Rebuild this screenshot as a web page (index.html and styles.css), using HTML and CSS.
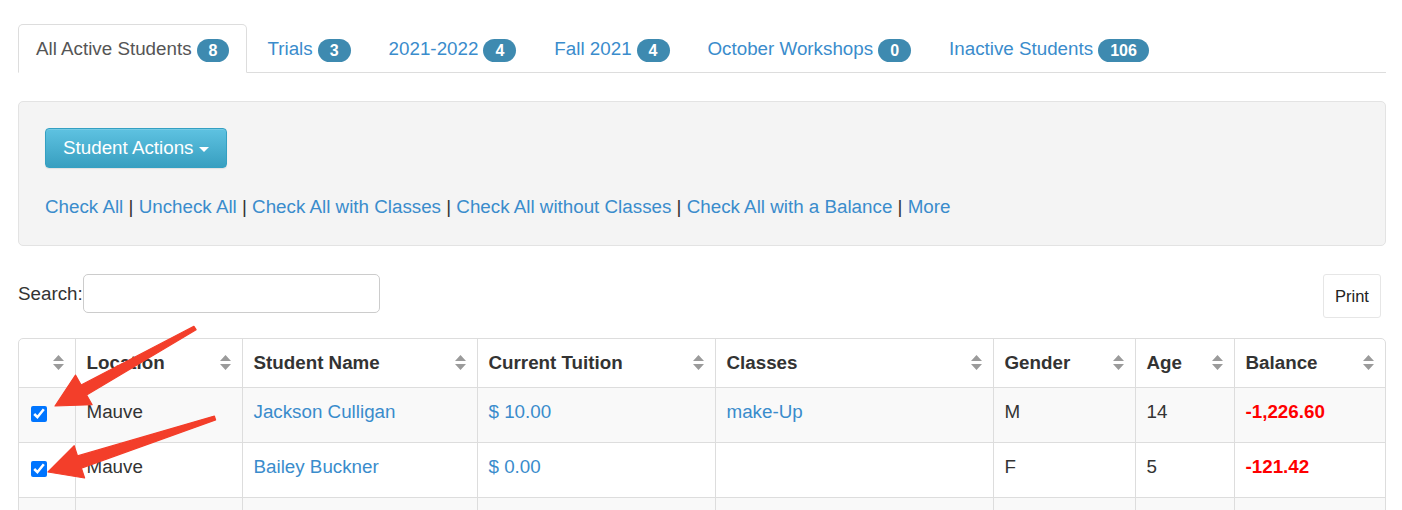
FILE: index.html
```html
<!DOCTYPE html>
<html>
<head>
<meta charset="utf-8">
<title>Students</title>
<link rel="stylesheet" href="styles.css">
</head>
<body>
<div class="page">
  <ul class="tabs">
    <li class="tab active"><a><span>All Active Students</span><span class="badge">8</span></a></li>
    <li class="tab"><a><span>Trials</span><span class="badge">3</span></a></li>
    <li class="tab"><a><span>2021-2022</span><span class="badge">4</span></a></li>
    <li class="tab"><a><span>Fall 2021</span><span class="badge">4</span></a></li>
    <li class="tab"><a><span>October Workshops</span><span class="badge">0</span></a></li>
    <li class="tab"><a><span>Inactive Students</span><span class="badge">106</span></a></li>
  </ul>

  <div class="well">
    <button class="btn-info">Student Actions <span class="caret"></span></button>
    <div class="check-links">
      <a>Check All</a> | <a>Uncheck All</a> | <a>Check All with Classes</a> | <a>Check All without Classes</a> | <a>Check All with a Balance</a> | <a>More</a>
    </div>
  </div>

  <div class="toolbar">
    <label class="search">Search:<input class="search-input" type="text"></label>
    <button class="print">Print</button>
  </div>

  <div class="table-wrap">
    <table class="data">
      <colgroup>
        <col class="c-check"><col class="c-loc"><col class="c-name"><col class="c-tuition"><col class="c-classes"><col class="c-gender"><col class="c-age"><col class="c-balance">
      </colgroup>
      <thead>
        <tr>
          <th><div class="th-in"><span></span><svg class="sort" viewBox="0 0 11 15"><path d="M0 6 L5.5 0 L11 6 Z M0 9 L5.5 15 L11 9 Z"/></svg></div></th>
          <th><div class="th-in"><span>Location</span><svg class="sort" viewBox="0 0 11 15"><path d="M0 6 L5.5 0 L11 6 Z M0 9 L5.5 15 L11 9 Z"/></svg></div></th>
          <th><div class="th-in"><span>Student Name</span><svg class="sort" viewBox="0 0 11 15"><path d="M0 6 L5.5 0 L11 6 Z M0 9 L5.5 15 L11 9 Z"/></svg></div></th>
          <th><div class="th-in"><span>Current Tuition</span><svg class="sort" viewBox="0 0 11 15"><path d="M0 6 L5.5 0 L11 6 Z M0 9 L5.5 15 L11 9 Z"/></svg></div></th>
          <th><div class="th-in"><span>Classes</span><svg class="sort" viewBox="0 0 11 15"><path d="M0 6 L5.5 0 L11 6 Z M0 9 L5.5 15 L11 9 Z"/></svg></div></th>
          <th><div class="th-in"><span>Gender</span><svg class="sort" viewBox="0 0 11 15"><path d="M0 6 L5.5 0 L11 6 Z M0 9 L5.5 15 L11 9 Z"/></svg></div></th>
          <th><div class="th-in"><span>Age</span><svg class="sort" viewBox="0 0 11 15"><path d="M0 6 L5.5 0 L11 6 Z M0 9 L5.5 15 L11 9 Z"/></svg></div></th>
          <th><div class="th-in"><span>Balance</span><svg class="sort" viewBox="0 0 11 15"><path d="M0 6 L5.5 0 L11 6 Z M0 9 L5.5 15 L11 9 Z"/></svg></div></th>
        </tr>
      </thead>
      <tbody>
        <tr class="odd">
          <td><input class="check" type="checkbox" checked></td>
          <td>Mauve</td>
          <td><a>Jackson Culligan</a></td>
          <td><a>$ 10.00</a></td>
          <td><a>make-Up</a></td>
          <td>M</td>
          <td>14</td>
          <td class="neg">-1,226.60</td>
        </tr>
        <tr>
          <td><input class="check" type="checkbox" checked></td>
          <td>Mauve</td>
          <td><a>Bailey Buckner</a></td>
          <td><a>$ 0.00</a></td>
          <td></td>
          <td>F</td>
          <td>5</td>
          <td class="neg">-121.42</td>
        </tr>
        <tr class="odd">
          <td>&nbsp;</td><td></td><td></td><td></td><td></td><td></td><td></td><td></td>
        </tr>
      </tbody>
    </table>
  </div>
</div>

<svg class="arrows" width="1402" height="510" viewBox="0 0 1402 510">
  <polygon points="193.9,326.3 81.1,385.0 75.5,375.1 55,406 92.1,404.7 86.6,395.0 196.1,329.7"/>
  <polygon points="214.4,416.1 77.5,455.9 74.2,445.7 48,472 84.6,478.0 81.4,468.1 215.6,419.9"/>
</svg>
</body>
</html>
```

FILE: styles.css
```css
* { box-sizing: border-box; }

body {
  margin: 0;
  position: relative;
  font-family: "Liberation Sans", Arial, sans-serif;
  font-size: 18.8px;
  line-height: 25px;
  color: #333;
  background: #fff;
}

a { color: #3a8ccc; text-decoration: none; }

.page {
  padding: 24px 16px 0 18px;
}

/* Tabs */
.tabs {
  list-style: none;
  margin: 0;
  padding: 0;
  display: flex;
  border-bottom: 1px solid #ddd;
}
.tab {
  margin-bottom: -1px;
  margin-right: 2px;
}
.tab a {
  display: flex;
  align-items: center;
  gap: 5px;
  height: 49px;
  padding: 0 17px 1px 17px;
  border: 1px solid transparent;
  border-radius: 5px 5px 0 0;
  white-space: nowrap;
}
.tab.active a {
  color: #555;
  background: #fff;
  border-color: #ddd #ddd transparent;
}
.badge {
  display: inline-block;
  height: 23px;
  line-height: 23px;
  padding: 0 12px;
  margin-top: 4px;
  border-radius: 12px;
  background: #3e8ab0;
  color: #fff;
  font-size: 16px;
  font-weight: bold;
}

/* Well */
.well {
  margin-top: 28px;
  background: #f4f4f4;
  border: 1px solid #e3e3e3;
  border-radius: 5px;
  padding: 26px 26px 26px 26px;
}
.btn-info {
  height: 40px;
  padding: 0 17px 0 17px;
  font-family: inherit;
  font-size: 18.8px;
  color: #fff;
  background: linear-gradient(to bottom, #5ec2e1 0%, #389fc0 100%);
  border: 1px solid #34a0c2;
  border-radius: 4px;
  box-shadow: inset 0 1px 0 rgba(255,255,255,0.15), 0 1px 1px rgba(0,0,0,0.08);
  display: inline-flex;
  align-items: center;
  gap: 5px;
}
.caret {
  display: inline-block;
  width: 0;
  height: 0;
  border-left: 5px solid transparent;
  border-right: 5px solid transparent;
  border-top: 5px solid #fff;
  margin-top: 2px;
}
.check-links {
  margin-top: 26px;
  line-height: 25px;
  color: #333;
}

/* Toolbar */
.toolbar {
  margin-top: 28px;
  display: flex;
  justify-content: space-between;
  align-items: flex-start;
}
.search {
  display: flex;
  align-items: center;
  height: 39px;
  color: #333;
}
.search-input {
  width: 297px;
  height: 39px;
  border: 1px solid #ccc;
  border-radius: 5px;
  font-family: inherit;
  font-size: 18px;
  margin: 0;
}
.print {
  height: 44px;
  width: 58px;
  margin-right: 5px;
  background: #fff;
  border: 1px solid #e6e6e6;
  border-radius: 3px;
  font-family: inherit;
  font-size: 16.5px;
  color: #222;
  padding: 0;
}

/* Table */
.table-wrap {
  margin-top: 20px;
  border: 1px solid #ddd;
  border-radius: 5px 5px 0 0;
  overflow: hidden;
}
.data {
  width: 100%;
  border-collapse: collapse;
  table-layout: fixed;
}
.c-check { width: 56px; }
.c-loc { width: 167px; }
.c-name { width: 235px; }
.c-tuition { width: 238px; }
.c-classes { width: 278px; }
.c-gender { width: 142px; }
.c-age { width: 99px; }
.c-balance { width: 151px; }

.data th, .data td {
  border-left: 1px solid #ddd;
  border-top: 1px solid #ddd;
  text-align: left;
  vertical-align: top;
}
.data th:first-child, .data td:first-child { border-left: none; }
.data thead th { border-top: none; }
.data th {
  padding: 11px 11px 12px 11px;
  font-weight: bold;
  color: #333;
}
.th-in {
  display: flex;
  justify-content: space-between;
  align-items: center;
  height: 25px;
}
.sort {
  width: 11px;
  height: 15px;
  fill: #9b9b9b;
  flex: none;
}
.data td {
  padding: 11px 11px 18px 11px;
  height: 55px;
}
.data tr.odd td { background: #f9f9f9; }
.check {
  display: block;
  width: 16px;
  height: 16px;
  margin: 7px 0 0 1px;
}
.neg {
  color: #ff0000;
  font-weight: bold;
}

/* Annotation arrows */
.arrows {
  position: absolute;
  top: 0;
  left: 0;
  pointer-events: none;
}
.arrows polygon {
  fill: #f33e2a;
  stroke: #f33e2a;
  stroke-width: 1.2;
  stroke-linejoin: round;
}
```
